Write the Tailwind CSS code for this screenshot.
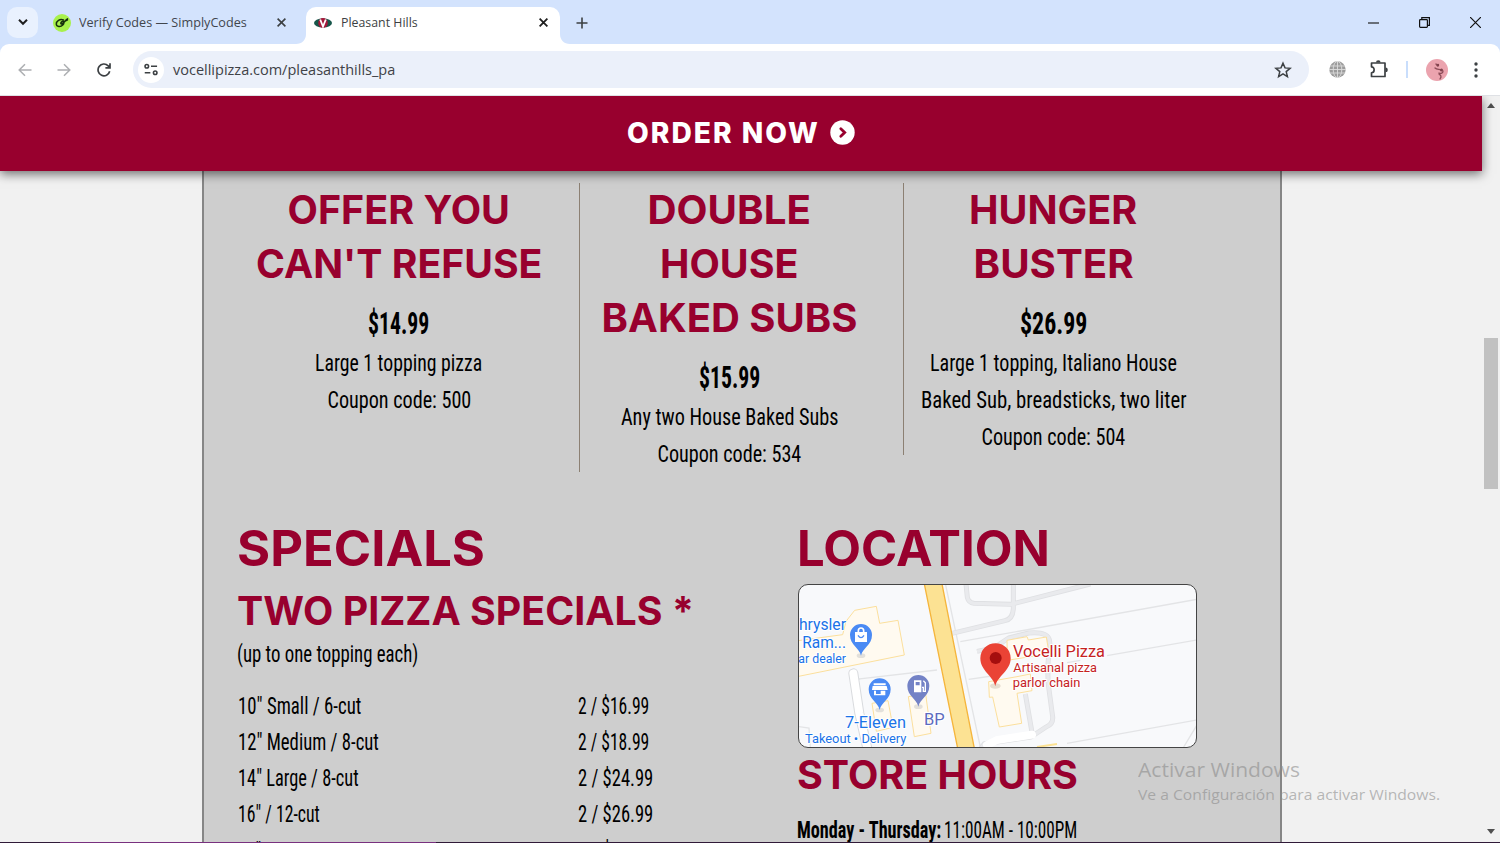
<!DOCTYPE html>
<html lang="en">
<head>
    <meta charset="UTF-8">
    <meta name="viewport" content="width=device-width, initial-scale=1.0">
    <title>Pleasant Hills</title>
    <script src="https://cdn.jsdelivr.net/npm/@tailwindcss/browser@4"></script>
</head>
<body class="w-[1500px] h-[843px] overflow-hidden flex flex-col bg-[#f1f1f1] font-['Open_Sans',sans-serif] text-black">

<!-- Tab strip -->
<div class="h-11 shrink-0 bg-[#d3e3fd] flex items-center text-[13px] text-[#41464d]">
    <div class="ml-[7px] w-[31px] h-[31px] rounded-[10px] bg-[#e9f1fe] flex items-center justify-center">
        <svg class="w-[10px] h-[8px]" viewBox="0 0 10 8" fill="none" stroke="#1f1f1f" stroke-width="2"><path d="M1 1.8l4 4 4-4"/></svg>
    </div>
    <div class="ml-[15px] mt-px w-[245px] flex items-center">
        <svg class="w-[18px] h-[18px] shrink-0" viewBox="0 0 18 18" fill="none">
            <circle cx="9" cy="9" r="9" fill="#a8f14c"/>
            <path d="M10.5 6C7 4.500 3 7 3.300 10.300c.2 2.500 4.200 3 6.500.7 1.600-1.600 1.200-3.300.2-3.500-1.500-.3-3 2.200-1.700 2.500 2 .4 3-3 6.200-5.200M11 7.500c1.500-.2 2.500-.8 3.500-1.500" stroke="#17300c" stroke-width="1.500" stroke-linecap="round"/>
        </svg>
        <div class="ml-2 mt-px w-[198px] whitespace-nowrap"><span class="inline-block origin-left" data-fit="168">Verify Codes — SimplyCodes</span></div>
        <svg class="w-[9px] h-[9px] shrink-0" viewBox="0 0 9 9" stroke="#3c4043" stroke-width="1.600"><path d="M.6.6l7.800 7.800M8.400.6L.6 8.400"/></svg>
    </div>
    <div class="relative ml-[8px] mt-[7px] w-[254px] h-[37px] rounded-t-[10px] bg-white flex items-center text-[#3c3f43]">
        <svg class="absolute -left-[10px] bottom-0 w-[10px] h-[10px]" viewBox="0 0 10 10" fill="#fff"><path d="M10 0v10H0C6 10 10 6 10 0z"/></svg>
        <svg class="absolute -right-[10px] bottom-0 w-[10px] h-[10px]" viewBox="0 0 10 10" fill="#fff"><path d="M0 0v10h10C4 10 0 6 0 0z"/></svg>
        <svg class="ml-[8px] -mt-[6px] w-[18px] h-[12px] shrink-0" viewBox="0 0 18 12">
            <ellipse cx="9" cy="6" rx="9" ry="4.600" fill="#16564a"/>
            <ellipse cx="9" cy="6" rx="4.800" ry="4.900" fill="#a5183a"/>
            <path d="M6.200 2.500L9 9.500l2.800-7" fill="none" stroke="#fff" stroke-width="1.800"/>
        </svg>
        <div class="ml-[9px] -mt-[5px] w-[198px] whitespace-nowrap"><span class="inline-block origin-left" data-fit="77">Pleasant Hills</span></div>
        <svg class="-mt-[6px] w-[9px] h-[9px] shrink-0" viewBox="0 0 9 9" stroke="#1f1f1f" stroke-width="1.800"><path d="M.6.6l7.800 7.800M8.400.6L.6 8.400"/></svg>
    </div>
    <svg class="ml-[16px] mt-px w-[12px] h-[12px]" viewBox="0 0 12 12" stroke="#3c4043" stroke-width="1.600"><path d="M6 .5v11M.5 6h11"/></svg>
    <div class="ml-auto mr-[19px] flex items-center gap-[40px]">
        <svg class="w-[11px] h-[11px]" viewBox="0 0 11 11" stroke="#222" stroke-width="1.200"><path d="M0 6h11"/></svg>
        <svg class="w-[11px] h-[11px]" viewBox="0 0 11 11" fill="none" stroke="#111" stroke-width="1.200"><rect x=".6" y="2.600" width="7.800" height="7.800" rx=".8"/><path d="M2.800 2.600V.6h7.600v7.800H8.400"/></svg>
        <svg class="w-[11px] h-[11px]" viewBox="0 0 11 11" stroke="#111" stroke-width="1.200"><path d="M0 0l11 11M11 0L0 11"/></svg>
    </div>
</div>

<!-- Toolbar -->
<div class="h-[52px] shrink-0 bg-[#d3e3fd]">
    <div class="h-full rounded-t-[9px] bg-white border-b border-[#dfe1e5] flex items-center">
        <svg class="ml-[18px] w-[14px] h-[14px]" viewBox="0 0 14 14" fill="none" stroke="#adafb2" stroke-width="1.500"><path d="M13.500 7H1.500M7 1.200L1.200 7 7 12.800"/></svg>
        <svg class="ml-[25px] w-[14px] h-[14px]" viewBox="0 0 14 14" fill="none" stroke="#adafb2" stroke-width="1.500"><path d="M.5 7h12M7 1.200L12.800 7 7 12.800"/></svg>
        <svg class="ml-[26px] w-[14px] h-[14px]" viewBox="0 0 14 14" fill="none" stroke="#3c4043" stroke-width="1.700"><path d="M12.700 8.300A5.900 5.900 0 1 1 11.200 2.800L12.600 4.300M13 .3v4.600H8.400"/></svg>
        <div class="ml-[22px] w-[1176px] h-[37px] rounded-full bg-[#ebf0fa] flex items-center">
            <div class="ml-[5px] w-[26px] h-[26px] rounded-full bg-white flex items-center justify-center">
                <svg class="w-[14px] h-[13px]" viewBox="0 0 15 13" fill="none" stroke="#3c4043" stroke-width="1.700"><circle cx="3" cy="3" r="1.900"/><path d="M7.500 3H14M.8 10h6"/><circle cx="12" cy="10" r="1.900"/></svg>
            </div>
            <div class="ml-[9px] whitespace-nowrap text-[14.500px] text-[#3f4247]"><span class="inline-block origin-left" data-fit="222">vocellipizza.com/pleasanthills_pa</span></div>
            <svg class="ml-auto mr-[17px] w-[18px] h-[18px]" viewBox="0 0 18 18" fill="none" stroke="#3c4043" stroke-width="1.500"><path d="M9 2.200l2 4.700 5.100.4-3.900 3.300 1.200 5L9 12.900l-4.400 2.700 1.200-5L1.900 7.300 7 6.900z"/></svg>
        </div>
        <svg class="ml-[20px] w-[17px] h-[17px]" viewBox="0 0 17 17" fill="none">
            <circle cx="8.500" cy="8.500" r="8.200" fill="#9c9c9c"/>
            <path d="M8.500 0v17M1 5h15M0 8.500h17M1 12h15" stroke="#ddd" stroke-width=".9"/><ellipse cx="8.500" cy="8.500" rx="4.300" ry="8.200" stroke="#ddd" stroke-width=".9"/>
        </svg>
        <svg class="ml-[23px] -mt-[2px] w-[20px] h-[18px]" viewBox="0 0 20 18" fill="none">
            <path d="M2.500 3H16v13.500H2.500v-3.700c3.500 0 3.500-6 0-6z" stroke="#3c4043" stroke-width="1.700" stroke-linejoin="round"/>
            <path d="M7 2.500a2.300 2.300 0 0 1 4.600 0zM16.500 7.600a2.300 2.300 0 0 1 0 4.600z" fill="#3c4043"/>
        </svg>
        <div class="ml-[17px] w-[2px] h-[17px] bg-[#c9defc]"></div>
        <svg class="ml-[18px] w-[22px] h-[22px]" viewBox="0 0 22 22" fill="none">
            <circle cx="11" cy="11" r="11" fill="#eba3ae"/>
            <path d="M10 5c1 1 1 2 2 2M9 9c2 2 4 1 6 2M17 12c0 2-2 3-4 2M13 15c1 1 2 1 2 3l-1 2" stroke="#8d4c58" stroke-width="1.300" stroke-linecap="round"/>
            <circle cx="12" cy="6" r="1.200" fill="#81404c"/><circle cx="15.500" cy="11" r="1.500" fill="#81404c"/>
        </svg>
        <svg class="ml-[26px] w-[4px] h-[16px]" viewBox="0 0 4 16" fill="#3c4043"><circle cx="2" cy="2" r="1.700"/><circle cx="2" cy="8" r="1.700"/><circle cx="2" cy="14" r="1.700"/></svg>
    </div>
</div>

<!-- Viewport -->
<div class="flex h-[746px] overflow-hidden">
    <div class="w-[1482px] flex flex-col">
        <header class="relative z-10 h-[75px] shrink-0 bg-[#98002e] shadow-[0_3px_10px_rgba(0,0,0,0.55)] flex items-center justify-center text-white font-['Inter',sans-serif]">
            <div class="w-[192px] whitespace-nowrap"><span class="inline-block origin-left text-[28px] leading-[28px] font-extrabold tracking-[2px]" data-fit="193">ORDER NOW</span></div>
            <svg class="ml-[11px] -mt-[2px] w-[25px] h-[25px]" viewBox="0 0 25 25"><circle cx="12.500" cy="12.500" r="12.200" fill="#fff"/><path d="M10.800 8.700l3.900 3.800-3.900 3.800" fill="none" stroke="#98002e" stroke-width="2.800" stroke-linecap="round"/></svg>
        </header>

        <main class="ml-[202px] w-[1080px] h-[671px] overflow-hidden border-x-2 border-[#868686] bg-[#cecece] font-['Roboto',sans-serif]">
            <!-- Offers -->
            <div class="ml-[15px] mt-3 flex items-start text-center text-[24.500px] leading-[37px] whitespace-nowrap">
                <section class="w-[360px] flex flex-col items-center">
                    <h3 class="flex flex-col items-center font-['Inter',sans-serif] font-bold text-[40px] leading-[54px] text-[#98002e]">
                        <span data-fit="222">OFFER YOU</span><span data-fit="286">CAN'T REFUSE</span>
                    </h3>
                    <b class="mt-[13px] text-[31px] leading-[39px] font-stretch-75%" data-fit="61">$14.99</b>
                    <span class="mt-px font-stretch-75%" data-fit="167">Large 1 topping pizza</span>
                    <span class="font-stretch-75%" data-fit="144">Coupon code: 500</span>
                </section>
                <section class="w-[324px] pr-6 border-l border-[#8c8073] flex flex-col items-center">
                    <h3 class="flex flex-col items-center font-['Inter',sans-serif] font-bold text-[40px] leading-[54px] text-[#98002e]">
                        <span data-fit="163">DOUBLE</span><span data-fit="138">HOUSE</span><span data-fit="256">BAKED SUBS</span>
                    </h3>
                    <b class="mt-[13px] text-[31px] leading-[39px] font-stretch-75%" data-fit="61">$15.99</b>
                    <span class="mt-px font-stretch-75%" data-fit="218">Any two House Baked Subs</span>
                    <span class="font-stretch-75%" data-fit="144">Coupon code: 534</span>
                </section>
                <section class="w-[300px] border-l border-[#8c8073] flex flex-col items-center">
                    <h3 class="flex flex-col items-center font-['Inter',sans-serif] font-bold text-[40px] leading-[54px] text-[#98002e]">
                        <span data-fit="168">HUNGER</span><span data-fit="160">BUSTER</span>
                    </h3>
                    <b class="mt-[13px] text-[31px] leading-[39px] font-stretch-75%" data-fit="67">$26.99</b>
                    <span class="mt-px font-stretch-75%" data-fit="247">Large 1 topping, Italiano House</span>
                    <span class="font-stretch-75%" data-fit="266">Baked Sub, breadsticks, two liter</span>
                    <span class="font-stretch-75%" data-fit="144">Coupon code: 504</span>
                </section>
            </div>

            <div class="mt-[45px] ml-[33px] flex whitespace-nowrap text-[24px] leading-9">
                <!-- Specials -->
                <section class="w-[560px]">
                    <h2 class="font-['Inter',sans-serif] font-bold text-[49px] leading-[64px] text-[#98002e]"><span class="inline-block origin-left" data-fit="248">SPECIALS</span></h2>
                    <h3 class="mt-0.5 font-['Inter',sans-serif] font-bold text-[40px] leading-[55px] text-[#98002e]"><span class="inline-block origin-left" data-fit="457">TWO PIZZA SPECIALS *</span></h3>
                    <p class="-mt-0.5"><span class="inline-block origin-left font-stretch-75%" data-fit="181">(up to one topping each)</span></p>
                    <ul class="mt-4 ml-px">
                        <li class="flex"><div class="w-[340px]"><span class="inline-block origin-left font-stretch-75%" data-fit="123">10" Small / 6-cut</span></div><span class="origin-left font-stretch-75%" data-fit="71">2 / $16.99</span></li>
                        <li class="flex"><div class="w-[340px]"><span class="inline-block origin-left font-stretch-75%" data-fit="141">12" Medium / 8-cut</span></div><span class="origin-left font-stretch-75%" data-fit="71">2 / $18.99</span></li>
                        <li class="flex"><div class="w-[340px]"><span class="inline-block origin-left font-stretch-75%" data-fit="121">14" Large / 8-cut</span></div><span class="origin-left font-stretch-75%" data-fit="75">2 / $24.99</span></li>
                        <li class="flex"><div class="w-[340px]"><span class="inline-block origin-left font-stretch-75%" data-fit="82">16" / 12-cut</span></div><span class="origin-left font-stretch-75%" data-fit="75">2 / $26.99</span></li>
                        <li class="mt-px flex"><div class="w-[340px]"><span class="inline-block origin-left font-stretch-75%" data-fit="82">18" / 12-cut</span></div><span class="origin-left font-stretch-75%" data-fit="75">2 / $29.99</span></li>
                    </ul>
                </section>

                <!-- Location -->
                <section class="w-[400px]">
                    <h2 class="font-['Inter',sans-serif] font-bold text-[49px] leading-[64px] text-[#98002e]"><span class="inline-block origin-left" data-fit="253">LOCATION</span></h2>
                    <div class="mt-[3px] ml-px w-[399px] h-[164px] rounded-[10px] border border-[#444] overflow-hidden bg-[#f8f9fb]">
                        <svg class="w-full h-full block" viewBox="56 225 1191 486" fill="none" font-family="Roboto, sans-serif">
                            <g stroke="#e3e4e6" stroke-width="4">
                                <path d="M496 225L600 711M540 395L1250 268M980 437L1250 390M860 458l40-7M565 508l70-10M860 700L1250 630M225 508L470 480M1210 711L1250 645M56 650l30 4 4 57M240 508l-10-5"/>
                            </g>
                            <g stroke="#dfe0e3" stroke-width="15" stroke-linejoin="round">
                                <path d="M557 222l4 40q4 16 20 18l110 3L930 222M699 222v75q-2 30-25 35L515 370"/>
                                <path d="M590 424l50-10 45-30 60-15q55-5 62 20l3 22q-12 50-5 120l12 90q2 22-20 30l-45 30-140 20-22 30M735 552l20 115"/>
                            </g>
                            <g stroke="#e9eaed" stroke-width="10" stroke-linejoin="round">
                                <path d="M557 222l4 40q4 16 20 18l110 3L930 222M699 222v75q-2 30-25 35L515 370"/>
                                <path d="M590 424l50-10 45-30 60-15q55-5 62 20l3 22q-12 50-5 120l12 90q2 22-20 30l-45 30-140 20-22 30M735 552l20 115"/>
                            </g>
                            <path d="M219 490l18 120 24 105" stroke="#d9dbde" stroke-width="30" stroke-linecap="round"/>
                            <path d="M219 490l18 120 24 105M620 705l30-15 105-16" stroke="#fff" stroke-width="24" stroke-linecap="round"/>
                            <g fill="#fffaf0" stroke="#fbdf9c" stroke-width="3">
                                <path d="M50 500l322-65-19-104-55 9-10-51-65 12-26 33-10 40-149 20z"/>
                                <path d="M275 580l48-8 15 80-50 12zM384 560l52-8 16 118-50 10zM680 391l60-11 4 10 54-9 8 50-125 20zM625 515l85-15 40 -8 5 50-45 8 14 90-67 11-20-90-10 1z"/>
                            </g>
                            <path d="M432 222h53L582 715H532z" fill="#fce293"/>
                            <path d="M432 222L532 715M485 222L582 715" stroke="#f5b53c" stroke-width="4"/>
                            <path d="M770 711l60-9" stroke="#fce293" stroke-width="6"/>
                            <!-- pins -->
                            <ellipse cx="242" cy="437" rx="13" ry="7" fill="#e3e0da"/>
                            <path d="M242 437c-4-22-33-32-33-62a33 33 0 0 1 66 0c0 30-29 40-33 62z" fill="#4a8af4"/>
                            <path d="M224 366h36v30h-36z" fill="#fff"/><path d="M234 368v-6a8 8 0 0 1 16 0v6" stroke="#fff" stroke-width="5"/><path d="M233 376q9 14 18 0" stroke="#4a8af4" stroke-width="4"/>
                            <ellipse cx="298" cy="600" rx="13" ry="7" fill="#e3e0da"/>
                            <path d="M298 600c-4-22-33-32-33-62a33 33 0 0 1 66 0c0 30-29 40-33 62z" fill="#4a8af4"/>
                            <path d="M280 520h36v6h-36zM277 528h42l3 12h-47zM281 542h6v10h14v-10h14v14h-34z" fill="#fff"/>
                            <ellipse cx="414" cy="590" rx="13" ry="7" fill="#e3e0da"/>
                            <path d="M414 590c-4-22-33-32-33-62a33 33 0 0 1 66 0c0 30-29 40-33 62z" fill="#7382c6"/>
                            <path d="M401 511h22v36h-22z" fill="#fff"/><path d="M406 516h12v10h-12z" fill="#7382c6"/><path d="M425 532h4v12h6v-26l-6-6" stroke="#fff" stroke-width="4"/>
                            <ellipse cx="645" cy="528" rx="16" ry="8" fill="#e6ded0"/>
                            <path d="M645 529c-5-30-45-46-45-84a45 45 0 0 1 91 0c0 38-41 54-46 84z" fill="#ea4335"/>
                            <circle cx="646" cy="444" r="18" fill="#a50e0e"/>
                            <!-- labels -->
                            <g stroke="#fff" stroke-width="6" paint-order="stroke" stroke-linejoin="round">
                                <g fill="#1a73e8">
                                    <text x="25" y="359" font-size="47" textLength="172" lengthAdjust="spacingAndGlyphs">Chrysler</text>
                                    <text x="66" y="414" font-size="47" textLength="131" lengthAdjust="spacingAndGlyphs">Ram...</text>
                                    <text x="30" y="460" font-size="37" textLength="167" lengthAdjust="spacingAndGlyphs">Car dealer</text>
                                    <text x="194" y="654" font-size="47" textLength="183" lengthAdjust="spacingAndGlyphs">7-Eleven</text>
                                    <text x="74" y="700" font-size="37" textLength="304" lengthAdjust="spacingAndGlyphs">Takeout • Delivery</text>
                                </g>
                                <text x="431" y="645" font-size="47" textLength="62" lengthAdjust="spacingAndGlyphs" fill="#5c6bc0">BP</text>
                                <g fill="#c5221f">
                                    <text x="698" y="442" font-size="47" textLength="276" lengthAdjust="spacingAndGlyphs">Vocelli Pizza</text>
                                    <text x="699" y="487" font-size="37" textLength="251" lengthAdjust="spacingAndGlyphs">Artisanal pizza</text>
                                    <text x="697" y="531" font-size="37" textLength="203" lengthAdjust="spacingAndGlyphs">parlor chain</text>
                                </g>
                            </g>
                        </svg>
                    </div>
                    <h3 class="font-['Inter',sans-serif] font-bold text-[40px] leading-[53px] text-[#98002e]"><span class="inline-block origin-left" data-fit="281">STORE HOURS</span></h3>
                    <p class="mt-[11px] flex"><span class="w-[147px]"><b class="inline-block origin-left font-stretch-75%" data-fit="144">Monday - Thursday:</b></span><span class="origin-left font-stretch-75%" data-fit="133">11:00AM - 10:00PM</span></p>
                </section>
            </div>
        </main>
    </div>

    <!-- Scrollbar -->
    <div class="w-[18px] bg-[#f1f1f1] flex flex-col items-center">
        <svg class="mt-[7px] w-[8px] h-[5px]" viewBox="0 0 8 5" fill="#505050"><path d="M0 5l4-5 4 5z"/></svg>
        <div class="mt-[230px] w-[14px] h-[151px] bg-[#c1c1c1]"></div>
        <svg class="mt-auto mb-[8px] w-[8px] h-[5px]" viewBox="0 0 8 5" fill="#505050"><path d="M0 0l4 5 4-5z"/></svg>
    </div>
</div>

<!-- Desktop taskbar edge -->
<div class="h-px shrink-0 bg-[#301a38] flex"><div class="ml-[60px] w-[376px] bg-[#78307e]"></div></div>

<!-- Windows activation notice -->
<div class="absolute left-[1138px] top-[756px] whitespace-nowrap text-[#8c8c8c]/60">
    <div class="text-[20px] leading-[27px]"><span class="inline-block origin-left" data-fit="162">Activar Windows</span></div>
    <div class="text-[15px] leading-[22px]"><span class="inline-block origin-left" data-fit="302">Ve a Configuración para activar Windows.</span></div>
</div>

<script>
// condense or widen each label to its set width, again whenever its own size changes
const observer = new ResizeObserver(entries => {
    entries.forEach(({ target }) => {
        target.style.transform = `scaleX(${target.dataset.fit / target.offsetWidth})`;
    });
});
document.querySelectorAll('[data-fit]').forEach(el => observer.observe(el));
</script>

</body>
</html>
